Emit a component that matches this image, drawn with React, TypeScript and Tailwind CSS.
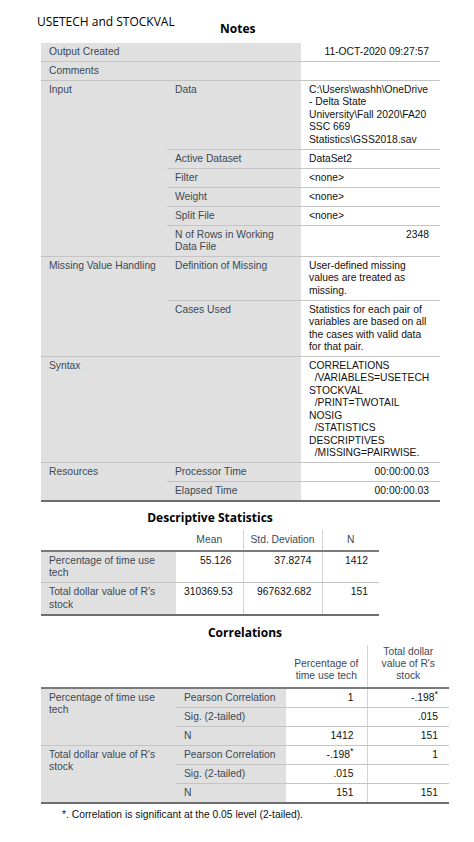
import React from 'react';

const label = 'text-[#3b4a56]';
const value = 'text-[#111111]';
const line = 'border-b border-[#c4c4c4]';
const lastLine = 'border-b-2 border-[#6e6e6e]';
const cell = 'align-top pl-[8px] pr-[10px] pt-[3px] pb-[2.6px]';

function Lines({ rows }: { rows: string[] }) {
  return (
    <>
      {rows.map((r, i) => (
        <div key={i} className="whitespace-pre">
          {r}
        </div>
      ))}
    </>
  );
}

type NoteRow = { group?: string; span?: number; sub?: string; val: string[]; right?: boolean; last?: boolean };

const notes: NoteRow[] = [
  { group: 'Output Created', val: ['11-OCT-2020 09:27:57'], right: true },
  { group: 'Comments', val: [''] },
  {
    group: 'Input',
    span: 6,
    sub: 'Data',
    val: ['C:\\Users\\washh\\OneDrive', '- Delta State', 'University\\Fall 2020\\FA20', 'SSC 669', 'Statistics\\GSS2018.sav'],
  },
  { sub: 'Active Dataset', val: ['DataSet2'] },
  { sub: 'Filter', val: ['<none>'] },
  { sub: 'Weight', val: ['<none>'] },
  { sub: 'Split File', val: ['<none>'] },
  { sub: 'N of Rows in Working\nData File', val: ['2348'], right: true },
  {
    group: 'Missing Value Handling',
    span: 2,
    sub: 'Definition of Missing',
    val: ['User-defined missing', 'values are treated as', 'missing.'],
  },
  {
    sub: 'Cases Used',
    val: ['Statistics for each pair of', 'variables are based on all', 'the cases with valid data', 'for that pair.'],
  },
  {
    group: 'Syntax',
    val: [
      'CORRELATIONS',
      '  /VARIABLES=USETECH',
      'STOCKVAL',
      '  /PRINT=TWOTAIL',
      'NOSIG',
      '  /STATISTICS',
      'DESCRIPTIVES',
      '  /MISSING=PAIRWISE.',
    ],
  },
  { group: 'Resources', span: 2, sub: 'Processor Time', val: ['00:00:00.03'], right: true },
  { sub: 'Elapsed Time', val: ['00:00:00.03'], right: true, last: true },
];

const star = (s: string) =>
  s.endsWith('*') ? (
    <>
      {s.slice(0, -1)}
      <span className="inline-block text-[9px] leading-[9px] align-top -mt-[2px]">*</span>
    </>
  ) : (
    s
  );

export default function App() {
  return (
    <div
      className="w-[474px] h-[842px] bg-white overflow-hidden"
      style={{ fontFamily: '"Liberation Sans", Arial, sans-serif' }}
    >
      {/* Header */}
      <div className="flex h-[43px] pt-[14px] text-[12px] leading-[16px] text-black" style={{ fontFamily: '"Open Sans", sans-serif' }}>
        <div className="pl-[37px] w-[220px]">USETECH and STOCKVAL</div>
        <div className="mt-[7px] font-bold">Notes</div>
      </div>

      {/* Notes */}
      <table className="ml-[41px] w-[399px] table-fixed border-collapse text-[10.3px] leading-[12.4px]">
        <colgroup>
          <col className="w-[126px]" />
          <col className="w-[134px]" />
          <col className="w-[139px]" />
        </colgroup>
        <tbody>
          {notes.map((r, i) => {
            const endsGroup = r.last ? lastLine : line;
            return (
              <tr key={i}>
                {r.group && (
                  <td
                    rowSpan={r.span ?? 1}
                    colSpan={r.sub ? 1 : 2}
                    className={`${cell} ${label} bg-[#e0e0e0] ${r.group === 'Resources' ? lastLine : line}`}
                  >
                    {r.group}
                  </td>
                )}
                {r.sub && (
                  <td className={`${cell} pl-[7px] ${label} bg-[#e0e0e0] ${endsGroup}`}>
                    <Lines rows={r.sub.split('\n')} />
                  </td>
                )}
                <td className={`${cell} pr-[11px] ${value} ${r.right ? 'text-right' : ''} ${endsGroup}`}>
                  <Lines rows={r.val} />
                </td>
              </tr>
            );
          })}
        </tbody>
      </table>

      {/* Descriptive Statistics */}
      <div
        className="ml-[41px] w-[338px] mt-[8px] text-center text-[12px] leading-[16px] font-bold text-black"
        style={{ fontFamily: '"Open Sans", sans-serif' }}
      >
        Descriptive Statistics
      </div>
      <table className="ml-[41px] mt-[4px] w-[338px] table-fixed border-collapse text-[10.3px] leading-[12.4px]">
        <colgroup>
          <col className="w-[135px]" />
          <col className="w-[67px]" />
          <col className="w-[79px]" />
          <col className="w-[57px]" />
        </colgroup>
        <thead>
          <tr className={label}>
            <th className="font-normal h-[21px] border-b-2 border-[#7a7a7a]"></th>
            <th className="font-normal text-center align-bottom pb-[4px] border-b-2 border-[#7a7a7a] border-r border-r-[#d4d4d4]">Mean</th>
            <th className="font-normal text-center align-bottom pb-[4px] border-b-2 border-[#7a7a7a] border-r border-r-[#d4d4d4]">Std. Deviation</th>
            <th className="font-normal text-center align-bottom pb-[4px] border-b-2 border-[#7a7a7a]">N</th>
          </tr>
        </thead>
        <tbody>
          {[
            { name: ['Percentage of time use', 'tech'], mean: '55.126', sd: '37.8274', n: '1412' },
            { name: ["Total dollar value of R's", 'stock'], mean: '310369.53', sd: '967632.682', n: '151' },
          ].map((r, i) => {
            const b = i === 1 ? lastLine : line;
            return (
              <tr key={i}>
                <td className={`${cell} ${label} bg-[#e0e0e0] ${b}`}>
                  <Lines rows={r.name} />
                </td>
                <td className={`${cell} pr-[11px] text-right ${value} border-r border-r-[#d4d4d4] ${b}`}>{r.mean}</td>
                <td className={`${cell} pr-[10px] text-right ${value} border-r border-r-[#d4d4d4] ${b}`}>{r.sd}</td>
                <td className={`${cell} pr-[11px] text-right ${value} ${b}`}>{r.n}</td>
              </tr>
            );
          })}
        </tbody>
      </table>

      {/* Correlations */}
      <div
        className="ml-[41px] w-[408px] mt-[9px] text-center text-[12px] leading-[16px] font-bold text-black"
        style={{ fontFamily: '"Open Sans", sans-serif' }}
      >
        Correlations
      </div>
      <table className="ml-[41px] mt-[4px] w-[408px] table-fixed border-collapse text-[10.3px] leading-[12.4px]">
        <colgroup>
          <col className="w-[135px]" />
          <col className="w-[110px]" />
          <col className="w-[81px]" />
          <col className="w-[82px]" />
        </colgroup>
        <thead>
          <tr className={label}>
            <th className="h-[43px] border-b-2 border-[#7a7a7a]"></th>
            <th className="border-b-2 border-[#7a7a7a]"></th>
            <th className="font-normal text-center align-bottom pb-[4px] border-b-2 border-[#7a7a7a] border-r border-r-[#d4d4d4]">
              <Lines rows={['Percentage of', 'time use tech']} />
            </th>
            <th className="font-normal text-center align-bottom pb-[4px] border-b-2 border-[#7a7a7a]">
              <Lines rows={['Total dollar', "value of R's", 'stock']} />
            </th>
          </tr>
        </thead>
        <tbody>
          {[
            { name: ['Percentage of time use', 'tech'], rows: [['Pearson Correlation', '1', '-.198*'], ['Sig. (2-tailed)', '', '.015'], ['N', '1412', '151']] },
            { name: ["Total dollar value of R's", 'stock'], rows: [['Pearson Correlation', '-.198*', '1'], ['Sig. (2-tailed)', '.015', ''], ['N', '151', '151']] },
          ].flatMap((g, gi) =>
            g.rows.map((r, ri) => {
              const b = gi === 1 && ri === 2 ? lastLine : line;
              return (
                <tr key={`${gi}-${ri}`}>
                  {ri === 0 && (
                    <td rowSpan={3} className={`${cell} ${label} bg-[#e0e0e0] ${gi === 1 ? lastLine : line}`}>
                      <Lines rows={g.name} />
                    </td>
                  )}
                  <td className={`${cell} pl-[7px] ${label} bg-[#e0e0e0] ${b}`}>{r[0]}</td>
                  <td className={`${cell} pr-[13px] text-right ${value} border-r border-r-[#d4d4d4] ${b}`}>{star(r[1])}</td>
                  <td className={`${cell} pr-[11px] text-right ${value} ${b}`}>{star(r[2])}</td>
                </tr>
              );
            })
          )}
        </tbody>
      </table>
      <div className="mt-[4px] pl-[62px] text-[10.3px] leading-[13px] text-[#111111]">
        *. Correlation is significant at the 0.05 level (2-tailed).
      </div>
    </div>
  );
}
